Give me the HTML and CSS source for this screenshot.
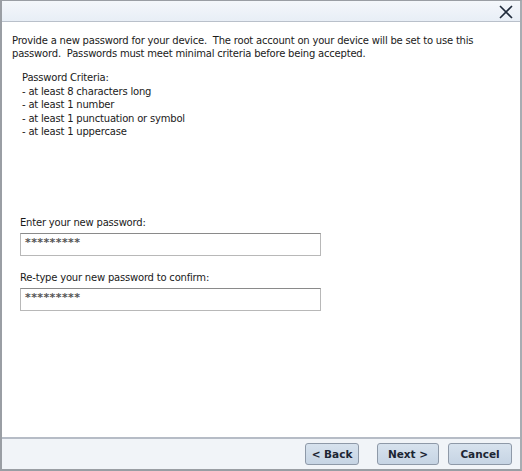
FILE: index.html
```html
<!DOCTYPE html>
<html>
<head>
<meta charset="utf-8">
<link rel="stylesheet" href="styles.css">
</head>
<body>
<div class="window">
  <div class="titlebar">
    <svg class="close" width="14" height="14" viewBox="0 0 14 14"><path d="M1 1 L13 13 M13 1 L1 13" stroke="#1f2a3a" stroke-width="1.6" fill="none"/></svg>
  </div>
  <div class="content">
    <p class="intro">Provide a new password for your device.&nbsp; The root account on your device will be set to use this password.&nbsp; Passwords must meet minimal criteria before being accepted.</p>
    <div class="criteria">
      <div>Password Criteria:</div>
      <div>- at least 8 characters long</div>
      <div>- at least 1 number</div>
      <div>- at least 1 punctuation or symbol</div>
      <div>- at least 1 uppercase</div>
    </div>
    <div class="fields">
      <label class="label">Enter your new password:</label>
      <div class="input"><span class="dots">*********</span></div>
      <label class="label">Re-type your new password to confirm:</label>
      <div class="input"><span class="dots">*********</span></div>
    </div>
  </div>
  <div class="footer">
    <button class="btn back">&lt; Back</button>
    <button class="btn next">Next &gt;</button>
    <button class="btn cancel">Cancel</button>
  </div>
</div>
</body>
</html>
```
FILE: styles.css
```css
html, body { margin: 0; padding: 0; background: #fff; }
body { width: 522px; height: 471px; overflow: hidden; font-family: "DejaVu Sans", Verdana, sans-serif; font-size: 10px; letter-spacing: -0.2px; color: #1a1a1a; }
.window { box-sizing: border-box; width: 522px; height: 471px; border: 1px solid #9a9ea4; border-left: 2px solid #9a9ea4; border-right: 2px solid #a8acb2; border-bottom: 2px solid #9a9ea4; display: flex; flex-direction: column; }
.titlebar { height: 20px; background: linear-gradient(#f4f7fb, #e8eef6); border-bottom: 1px solid #b9c0ca; display: flex; justify-content: flex-end; align-items: center; padding-right: 7px; }
.close { display: block; margin-top: 2px; }
.content { flex: 1; padding: 12px 10px 0 10px; }
.intro { margin: 0; line-height: 13px; width: 490px; }
.criteria { margin: 11px 0 0 10px; line-height: 13.6px; }
.fields { margin: 77px 0 0 8px; display: flex; flex-direction: column; }
.label { line-height: 13px; margin-bottom: 4px; }
.input { box-sizing: border-box; width: 301px; height: 23px; border: 1px solid #b8b8b8; border-top-color: #8a8a8a; margin-bottom: 15px; padding: 2px 0 0 4px; }
.dots { font-size: 11px; font-weight: bold; letter-spacing: 0.4px; color: #555; }
.footer { height: 30px; background: #f1f4f8; border-top: 2px solid #b6bcc6; display: flex; justify-content: flex-end; align-items: center; gap: 9px; padding-right: 8px; }
.btn { box-sizing: border-box; height: 22px; border: 1px solid #8e99a8; border-radius: 3px; background: linear-gradient(#d7e2ee, #c6d4e4); font-family: "DejaVu Sans", Verdana, sans-serif; font-weight: bold; font-size: 10.5px; color: #1c2533; padding: 0; }
.back { width: 54px; margin-right: 9px; }
.next { width: 62px; }
.cancel { width: 64px; }
```
